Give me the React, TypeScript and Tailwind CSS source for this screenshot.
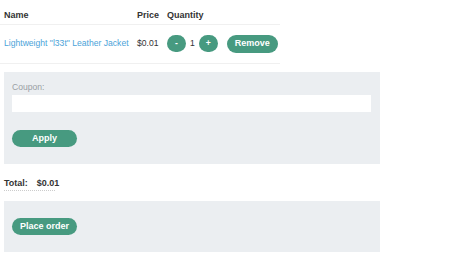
import React, { useState } from 'react';

const btn = 'rounded-full bg-[#479a80] text-white font-bold leading-none flex items-center justify-center';

export default function App() {
  const [qty, setQty] = useState(1);
  const [coupon, setCoupon] = useState('');

  return (
    <div className="w-[474px] h-[262px] bg-white text-[8.6px] text-[#333] font-['Liberation_Sans',Arial,sans-serif]">
      <table className="w-[280px] border-collapse text-left">
        <thead>
          <tr className="h-[24px] border-b border-[#f0f0f0]">
            <th className="pl-[4px] w-[133px] font-bold align-bottom pb-[1px] text-[9px]">Name</th>
            <th className="pl-[4px] w-[30px] font-bold align-bottom pb-[1px] text-[9px]">Price</th>
            <th className="pl-[4px] font-bold align-bottom pb-[1px] text-[9px]">Quantity</th>
          </tr>
        </thead>
        <tbody>
          <tr className="h-[39px] border-b border-[#f0f0f0]">
            <td className="pl-[4px]">
              <a href="#" className="text-[#4ba3d9]">Lightweight "l33t" Leather Jacket</a>
            </td>
            <td className="pl-[4px]">$0.01</td>
            <td className="pl-[4px]">
              <div className="flex items-center">
                <button onClick={() => setQty(Math.max(0, qty - 1))} className={`${btn} w-[19px] h-[17px]`}>-</button>
                <span className="mx-[4px]">{qty}</span>
                <button onClick={() => setQty(qty + 1)} className={`${btn} w-[19px] h-[17px]`}>+</button>
                <button className={`${btn} ml-[9px] w-[51px] h-[18px] text-[9px]`}>Remove</button>
              </div>
            </td>
          </tr>
        </tbody>
      </table>

      <div className="ml-[4px] mt-[8px] w-[376px] h-[92px] bg-[#ebeef1] px-[8px] pt-[11px]">
        <div className="text-[#9aa0a4] leading-none h-[12px]">Coupon:</div>
        <input
          value={coupon}
          onChange={(e) => setCoupon(e.target.value)}
          className="block w-[359px] h-[17px] bg-white outline-none px-[4px]"
        />
        <button className={`${btn} mt-[18px] w-[65px] h-[17px] text-[9px]`}>Apply</button>
      </div>

      <div className="ml-[4px] mt-[15px] w-[51px] h-[12px] flex items-center gap-[9px] font-bold text-[9px] border-b border-dotted border-[#ccc]">
        <span>Total:</span>
        <span>$0.01</span>
      </div>

      <div className="ml-[4px] mt-[10px] w-[376px] h-[51px] bg-[#ebeef1] px-[8px] pt-[17px]">
        <button className={`${btn} w-[65px] h-[17px] text-[9px]`}>Place order</button>
      </div>
    </div>
  );
}
